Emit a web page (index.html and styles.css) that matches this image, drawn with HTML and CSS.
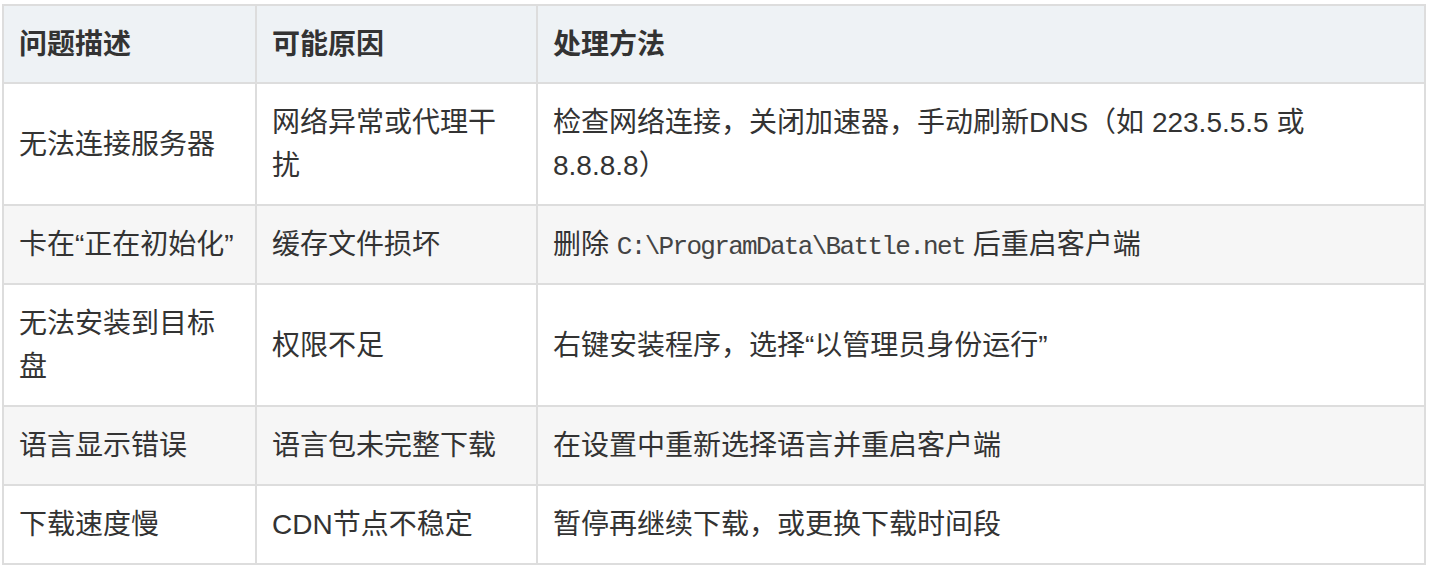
FILE: index.html
```html
<!DOCTYPE html>
<html lang="zh-CN">
<head>
<meta charset="utf-8">
<title>问题排查</title>
<link rel="stylesheet" href="styles.css">
</head>
<body>
<table class="faq">
  <colgroup>
    <col class="c1">
    <col class="c2">
    <col class="c3">
  </colgroup>
  <thead>
    <tr><th>问题描述</th><th>可能原因</th><th>处理方法</th></tr>
  </thead>
  <tbody>
    <tr><td>无法连接服务器</td><td>网络异常或代理干扰</td><td>检查网络连接，关闭加速器，手动刷新DNS（如 223.5.5.5 或 8.8.8.8）</td></tr>
    <tr><td>卡在“正在初始化”</td><td>缓存文件损坏</td><td>删除 <code class="path">C:\ProgramData\Battle.net</code> 后重启客户端</td></tr>
    <tr><td>无法安装到目标盘</td><td>权限不足</td><td>右键安装程序，选择“以管理员身份运行”</td></tr>
    <tr><td>语言显示错误</td><td>语言包未完整下载</td><td>在设置中重新选择语言并重启客户端</td></tr>
    <tr><td>下载速度慢</td><td>CDN节点不稳定</td><td>暂停再继续下载，或更换下载时间段</td></tr>
  </tbody>
</table>
</body>
</html>
```
FILE: styles.css
```css
html, body {
  margin: 0;
  padding: 0;
  background: #ffffff;
}

body {
  padding: 4px 0 0 2px;
  font-family: "Liberation Sans", "Noto Sans CJK SC", sans-serif;
  color: #333333;
}

.faq {
  border-collapse: collapse;
  table-layout: fixed;
  width: 1422px;
  font-size: 28px;
  line-height: 43px;
}

.c1 { width: 253px; }
.c2 { width: 281px; }
.c3 { width: 888px; }

.faq th,
.faq td {
  border: 2px solid #dddddd;
  padding: 17px 15px;
  text-align: left;
  vertical-align: middle;
}

.faq th {
  padding-bottom: 16px;
  background: #eef2f5;
  font-weight: bold;
  color: #333333;
}

.faq tbody tr:nth-child(even) td {
  background: #f6f6f6;
}

.path {
  font-family: "Liberation Mono", monospace;
  font-size: 26px;
  line-height: 1;
  letter-spacing: -1.68px;
  color: #444444;
}
```
